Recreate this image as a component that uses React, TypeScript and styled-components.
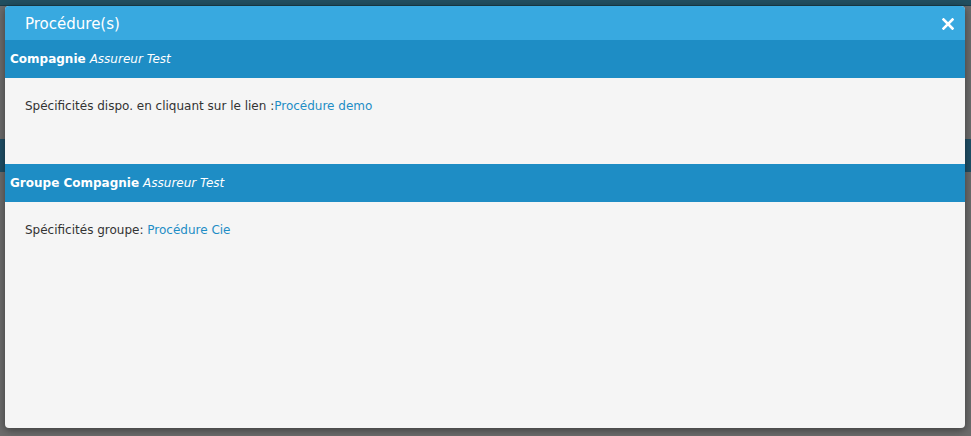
import React from 'react';
import styled, { createGlobalStyle } from 'styled-components';

const GlobalStyle = createGlobalStyle`
  *, *::before, *::after {
    box-sizing: border-box;
  }
  html, body {
    margin: 0;
    padding: 0;
    width: 971px;
    height: 436px;
    overflow: hidden;
    background: #6b6b6b;
    font-family: "DejaVu Sans", Verdana, sans-serif;
  }
`;

// dimmed application behind the modal
const Page = styled.div`
  position: relative;
  width: 971px;
  height: 436px;
  display: flex;
  flex-direction: column;
  background: #6c6c6c;
`;

const NavBar = styled.div`
  height: 6px;
  background: #224f60;
  border-bottom: 1px solid #1a3d4a;
`;

const PageBand = styled.div<{ $top: number; $height: number }>`
  margin-top: ${(p) => p.$top}px;
  height: ${(p) => p.$height}px;
  background: #1f4f66;
`;

const Backdrop = styled.div`
  position: absolute;
  inset: 0;
  display: flex;
  padding: 6px 6px 8px 5px;
`;

const Dialog = styled.section`
  flex: 1;
  display: flex;
  flex-direction: column;
  background: #f5f5f5;
  border-radius: 4px;
  overflow: hidden;
  box-shadow: 0 2px 8px rgba(0, 0, 0, 0.45);
`;

const TitleBar = styled.header`
  height: 34px;
  flex: none;
  display: flex;
  align-items: center;
  justify-content: space-between;
  padding: 2px 10px 0 20px;
  background: #38a9e0;
  color: #fff;
`;

const Title = styled.h1`
  margin: 0;
  font-size: 15px;
  font-weight: normal;
`;

const CloseButton = styled.button`
  border: none;
  background: none;
  padding: 0;
  width: 14px;
  height: 14px;
  display: flex;
  align-items: center;
  justify-content: center;
  cursor: pointer;
`;

const SectionHeader = styled.h2`
  margin: 0;
  height: 38px;
  flex: none;
  display: flex;
  align-items: center;
  padding: 0 5px;
  background: #1e8dc5;
  color: #fff;
  font-size: 12px;
  font-weight: bold;

  em {
    font-weight: normal;
    margin-left: 4px;
  }
`;

const SectionBody = styled.div<{ $height?: number }>`
  ${(p) => (p.$height ? `height: ${p.$height}px; flex: none;` : 'flex: 1;')}
  padding: 21px 20px 0;
  font-size: 12px;
  color: #333;
`;

const Link = styled.a`
  color: #1e8dc5;
  text-decoration: none;
`;

export default function App() {
  return (
    <>
      <GlobalStyle />
      <Page>
        <NavBar />
        <PageBand $top={133} $height={33} />
      </Page>
      <Backdrop>
        <Dialog>
          <TitleBar>
            <Title>Procédure(s)</Title>
            <CloseButton aria-label="Fermer">
              <svg width="12" height="12" viewBox="0 0 12 12">
                <path d="M1.5 1.5 L10.5 10.5 M10.5 1.5 L1.5 10.5" stroke="#fff" strokeWidth="2.6" strokeLinecap="square" />
              </svg>
            </CloseButton>
          </TitleBar>
          <SectionHeader>
            Compagnie<em>Assureur Test</em>
          </SectionHeader>
          <SectionBody $height={86}>
            Spécificités dispo. en cliquant sur le lien :<Link href="#">Procédure demo</Link>
          </SectionBody>
          <SectionHeader>
            Groupe Compagnie<em>Assureur Test</em>
          </SectionHeader>
          <SectionBody>
            Spécificités groupe: <Link href="#">Procédure Cie</Link>
          </SectionBody>
        </Dialog>
      </Backdrop>
    </>
  );
}
